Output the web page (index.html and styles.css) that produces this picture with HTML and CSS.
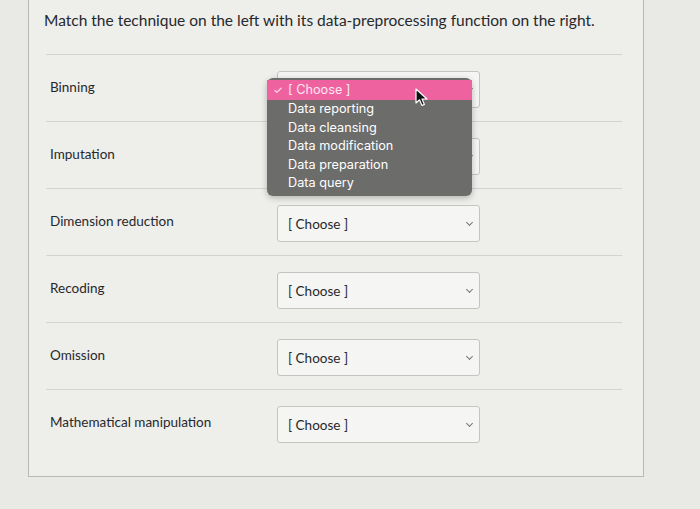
FILE: index.html
```html
<!DOCTYPE html>
<html lang="en">
<head>
  <meta charset="UTF-8" />
  <title>Matching question</title>
  <link rel="stylesheet" href="styles.css">
</head>
<body>
  <div class="card">
    <p class="question">Match the technique on the left with its data-preprocessing function on the right.</p>

    <div class="answers">
      <div class="row">
        <span class="label">Binning</span>
        <div class="select-wrap">
          <div class="select"><span></span><i class="chev"></i></div>
          <ul class="menu">
            <li class="active"><span class="tick">✓</span>[ Choose ]</li>
            <li>Data reporting</li>
            <li>Data cleansing</li>
            <li>Data modification</li>
            <li>Data preparation</li>
            <li>Data query</li>
          </ul>
          <svg class="cursor" width="14" height="20" viewBox="0 0 14 20">
            <path d="M1 1 L1 15 L4.5 11.8 L7 17.5 L9.4 16.4 L7 11 L12 11 Z" fill="#111" stroke="#fff" stroke-width="1.2" stroke-linejoin="round"/>
          </svg>
        </div>
      </div>

      <div class="row">
        <span class="label">Imputation</span>
        <div class="select-wrap">
          <div class="select"><span></span><i class="chev"></i></div>
        </div>
      </div>

      <div class="row">
        <span class="label">Dimension reduction</span>
        <div class="select-wrap">
          <div class="select"><span>[ Choose ]</span><i class="chev"></i></div>
        </div>
      </div>

      <div class="row">
        <span class="label">Recoding</span>
        <div class="select-wrap">
          <div class="select"><span>[ Choose ]</span><i class="chev"></i></div>
        </div>
      </div>

      <div class="row">
        <span class="label">Omission</span>
        <div class="select-wrap">
          <div class="select"><span>[ Choose ]</span><i class="chev"></i></div>
        </div>
      </div>

      <div class="row">
        <span class="label">Mathematical manipulation</span>
        <div class="select-wrap">
          <div class="select"><span>[ Choose ]</span><i class="chev"></i></div>
        </div>
      </div>
    </div>
  </div>
</body>
</html>
```

FILE: styles.css
```css
* {
  margin: 0;
  padding: 0;
  box-sizing: border-box;
}

body {
  font-family: Lato, 'Open Sans', sans-serif;
  background: #e9e9e6;
  color: #26292c;
  height: 509px;
  overflow: hidden;
}

.card {
  margin-left: 28px;
  width: 616px;
  background: #eeeeeb;
  border: 1px solid #b8b8b6;
  border-top: none;
  padding: 9px 21px 20px 15px;
}

.question {
  font-size: 15.5px;
  line-height: 22px;
  margin-bottom: 23px;
}

.answers {
  margin-left: 2px;
}

.row {
  display: flex;
  align-items: center;
  border-top: 1px solid #d3d3d0;
  padding: 16px 0 13px 4px;
}

.label {
  width: 227px;
  font-size: 13.5px;
  margin-top: -5px;
}

.select-wrap {
  position: relative;
}

.select {
  width: 203px;
  height: 37px;
  display: flex;
  align-items: center;
  justify-content: space-between;
  padding: 0 7px 0 10px;
  background: #f5f5f3;
  border: 1px solid #c4c4c1;
  border-radius: 3px;
  font-size: 13.5px;
  color: #26292c;
}

.chev {
  width: 5px;
  height: 5px;
  border-right: 1.2px solid #777;
  border-bottom: 1.2px solid #777;
  transform: rotate(45deg);
  margin-top: -3px;
}

.menu {
  position: absolute;
  left: -10px;
  top: 7px;
  width: 205px;
  list-style: none;
  background: #6c6c6b;
  border-radius: 6px;
  padding: 2px 0 3px;
  box-shadow: 0 2px 6px rgba(0, 0, 0, 0.25);
  font-family: Inter, 'Noto Sans', sans-serif;
  font-size: 12.7px;
  color: #fff;
  z-index: 2;
}

.menu li {
  height: 18.6px;
  line-height: 18.6px;
  padding-left: 21px;
}

.menu li.active {
  height: 20px;
  line-height: 20px;
  background: #ef62a0;
  color: #fde6f0;
  position: relative;
}

.tick {
  position: absolute;
  left: 6px;
  font-size: 11px;
}

.cursor {
  position: absolute;
  left: 138px;
  top: 17px;
  z-index: 3;
}
```
